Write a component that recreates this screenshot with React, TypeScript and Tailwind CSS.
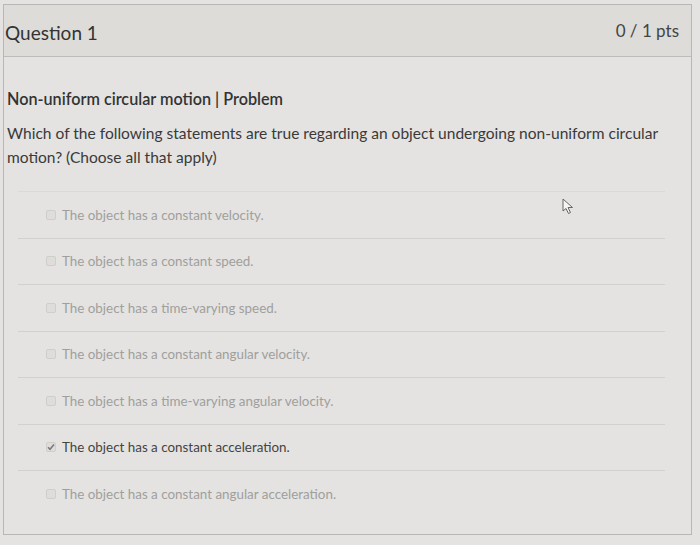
import React from 'react'

const answers = [
  { text: 'The object has a constant velocity.', checked: false },
  { text: 'The object has a constant speed.', checked: false },
  { text: 'The object has a time-varying speed.', checked: false },
  { text: 'The object has a constant angular velocity.', checked: false },
  { text: 'The object has a time-varying angular velocity.', checked: false },
  { text: 'The object has a constant acceleration.', checked: true },
  { text: 'The object has a constant angular acceleration.', checked: false },
]

function Checkbox({ checked }: { checked: boolean }) {
  return (
    <span className="flex h-[10px] w-[10px] shrink-0 items-center justify-center rounded-[2px] border border-[#cfcecb] bg-[#dedddb]">
      {checked && (
        <svg width="8" height="8" viewBox="0 0 8 8">
          <path d="M1 4.2 L3 6.2 L7 1.5" fill="none" stroke="#7a7a7a" strokeWidth="1.6" />
        </svg>
      )}
    </span>
  )
}

export default function App() {
  return (
    <div className="relative h-[545px] w-[700px] overflow-hidden bg-[#e4e3e1] pl-[3px] pr-[8px] pt-[4px] font-['Lato','Open_Sans',sans-serif]">
      <div className="h-[531px] border border-[#b8b7b4]">
        <div className="flex h-[52px] items-start justify-between border-b border-[#bdbcb9] bg-[#dddcd9] pl-[1px] pr-[12px]">
          <h2 className="pt-[15px] text-[19px] leading-[26px] text-[#333]">Question 1</h2>
          <span className="pt-[14px] text-[17px] leading-[24px] text-[#444]">0 / 1 pts</span>
        </div>

        <div className="pl-[3px] pt-[30px]">
          <p className="text-[16.2px] font-semibold leading-[24px] text-[#333]">
            Non-uniform circular motion | Problem
          </p>
          <p className="mt-[10px] pr-[20px] text-[15.55px] leading-[24px] text-[#3a3a3a]">
            Which of the following statements are true regarding an object undergoing non-uniform circular motion? (Choose all that apply)
          </p>
        </div>

        <div className="ml-[14px] mr-[26px] mt-[22px]">
          {answers.map((a, i) => (
            <div
              key={a.text}
              className={`flex h-[46.5px] items-center gap-[6px] pl-[28px] border-t ${i > 0 ? 'border-[#d2d1ce]' : 'border-[#dad9d6]'}`}
            >
              <Checkbox checked={a.checked} />
              <span className={`text-[13.4px] ${a.checked ? 'text-[#444]' : 'text-[#9f9f9d]'}`}>
                {a.text}
              </span>
            </div>
          ))}
        </div>
      </div>

      <svg className="absolute left-[562px] top-[198px]" width="13" height="17" viewBox="0 0 13 17">
        <path d="M1 1 L1 13 L4 10.5 L6.5 15.5 L8.5 14.5 L6 9.5 L10.5 9.5 Z" fill="#f4f4f4" stroke="#666" strokeWidth="1" strokeLinejoin="round" />
      </svg>
    </div>
  )
}
